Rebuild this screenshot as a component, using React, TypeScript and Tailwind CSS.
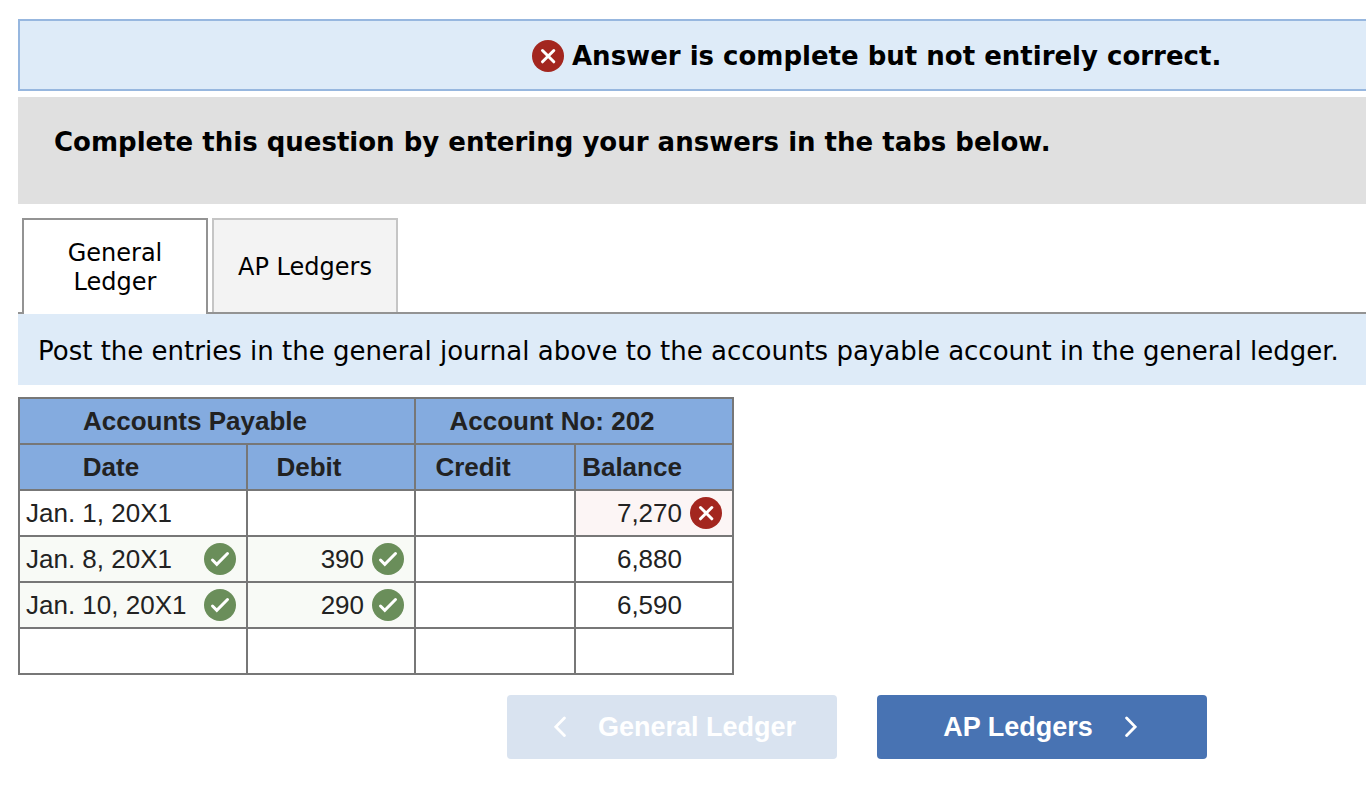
import React, { useState } from 'react';
import clsx from 'clsx';

type Mark = 'correct' | 'wrong';

interface Entry {
  text?: string;
  mark?: Mark;
}

interface LedgerRow {
  date: Entry;
  debit: Entry;
  credit: Entry;
  balance: Entry;
}

const TABS = ['General Ledger', 'AP Ledgers'];

const ROWS: LedgerRow[] = [
  { date: { text: 'Jan. 1, 20X1' }, debit: {}, credit: {}, balance: { text: '7,270', mark: 'wrong' } },
  { date: { text: 'Jan. 8, 20X1', mark: 'correct' }, debit: { text: '390', mark: 'correct' }, credit: {}, balance: { text: '6,880' } },
  { date: { text: 'Jan. 10, 20X1', mark: 'correct' }, debit: { text: '290', mark: 'correct' }, credit: {}, balance: { text: '6,590' } },
  { date: {}, debit: {}, credit: {}, balance: {} },
];

const MarkIcon: React.FC<{ mark: Mark }> = ({ mark }) => (
  <svg
    viewBox="0 0 32 32"
    className="w-8 h-8 shrink-0"
    fill="none"
    stroke="white"
    strokeLinecap="round"
    role="img"
    aria-label={mark === 'correct' ? 'Correct' : 'Incorrect'}
  >
    {mark === 'correct' ? (
      <>
        <circle cx="16" cy="16" r="16" fill="#6a8e5a" stroke="none" />
        <path d="M8.5 17 L12.8 21.3 L23.5 10.5" strokeWidth="3" />
      </>
    ) : (
      <>
        <circle cx="16" cy="16" r="16" fill="#a3261f" stroke="none" />
        <path d="M10.5 10.5 L21.8 21.8 M21.8 10.5 L10.5 21.8" strokeWidth="3" />
      </>
    )}
  </svg>
);

const HeadCell: React.FC<{ span?: number; children: React.ReactNode }> = ({ span, children }) => (
  <th colSpan={span} className="h-[46px] border-2 border-[#777777] bg-[#84abdf] p-0 pr-11 font-bold text-center">
    {children}
  </th>
);

const EntryCell: React.FC<{ entry: Entry; left?: boolean }> = ({ entry, left }) => (
  <td
    className={clsx(
      'h-[46px] border-2 border-[#777777] p-0',
      entry.mark === 'correct' && 'bg-[#f8faf6]',
      entry.mark === 'wrong' && 'bg-[#fcf5f5]'
    )}
  >
    <div className="flex items-center">
      <span className={clsx('flex-1 px-1.5 whitespace-nowrap', left ? 'text-left' : 'text-right')}>{entry.text}</span>
      <span className="w-11 shrink-0 pl-0.5">{entry.mark && <MarkIcon mark={entry.mark} />}</span>
    </div>
  </td>
);

const Chevron: React.FC<{ left?: boolean }> = ({ left }) => (
  <svg viewBox="0 0 12 22" className="w-3 h-[22px]" fill="none" stroke="white" strokeWidth="2.8" strokeLinecap="round" aria-hidden="true">
    <path d={left ? 'M10.4 2 L1.8 10.8 L10.4 19.6' : 'M1.6 2 L10.2 10.8 L1.6 19.6'} />
  </svg>
);

export default function App() {
  const [tab, setTab] = useState(0);

  return (
    <main className="pt-[19px] pl-[18px] pb-12 bg-white text-black text-[26px] leading-8 font-[Verdana,'DejaVu_Sans',sans-serif]">
      {/* Result banner */}
      <div className="flex items-center gap-2 pt-[19px] pb-[17px] pl-[512px] border-2 border-r-0 border-[#97b7df] bg-[#deebf8] font-bold whitespace-nowrap">
        <MarkIcon mark="wrong" />
        <p>Answer is complete but not entirely correct.</p>
      </div>

      <div className="mt-1.5 pt-[29px] pb-[46px] pl-9 bg-[#e0e0e0] font-bold">
        <p>Complete this question by entering your answers in the tabs below.</p>
      </div>

      {/* Tabs */}
      <div role="tablist" className="flex gap-1 mt-3.5 pl-1 border-b-2 border-[#939393]">
        {TABS.map((name, i) => (
          <button
            key={name}
            type="button"
            role="tab"
            aria-selected={tab === i}
            onClick={() => setTab(i)}
            className={clsx(
              'w-[186px] px-4 pt-0.5 border-2 border-b-0 text-[24px] leading-[29px] cursor-pointer',
              tab === i ? 'h-24 -mb-0.5 bg-white border-[#939393]' : 'h-[94px] bg-[#f3f3f3] border-[#c5c5c5]'
            )}
          >
            {name}
          </button>
        ))}
      </div>

      <p className="pt-[22px] pb-[18px] pl-5 leading-[31px] bg-[#deebf8] whitespace-nowrap">
        Post the entries in the general journal above to the accounts payable account in the general ledger.
      </p>

      <table className="mt-3 w-[716px] table-fixed border-collapse text-[#222222] font-[Arial,'Liberation_Sans',sans-serif]">
        <colgroup>
          <col className="w-[228px]" />
          <col className="w-[168px]" />
          <col className="w-[160px]" />
          <col className="w-[158px]" />
        </colgroup>
        <thead>
          <tr>
            <HeadCell span={2}>Accounts Payable</HeadCell>
            <HeadCell span={2}>Account No: 202</HeadCell>
          </tr>
          <tr>
            <HeadCell>Date</HeadCell>
            <HeadCell>Debit</HeadCell>
            <HeadCell>Credit</HeadCell>
            <HeadCell>Balance</HeadCell>
          </tr>
        </thead>
        <tbody>
          {ROWS.map((row, i) => (
            <tr key={i}>
              <EntryCell entry={row.date} left />
              <EntryCell entry={row.debit} />
              <EntryCell entry={row.credit} />
              <EntryCell entry={row.balance} />
            </tr>
          ))}
        </tbody>
      </table>

      {/* Previous / next */}
      <div className="flex gap-10 mt-5 pl-[489px] text-white text-[27px] font-bold font-[Arial,'Liberation_Sans',sans-serif]">
        <button
          type="button"
          disabled
          className="flex items-center justify-center gap-8 w-[330px] h-16 pl-1.5 rounded bg-[#d9e3f0]"
        >
          <Chevron left />
          General Ledger
        </button>
        <button
          type="button"
          onClick={() => setTab(1)}
          className="flex items-center justify-center gap-8 w-[330px] h-16 pr-1 rounded bg-[#4873b3] cursor-pointer"
        >
          AP Ledgers
          <Chevron />
        </button>
      </div>
    </main>
  );
}
